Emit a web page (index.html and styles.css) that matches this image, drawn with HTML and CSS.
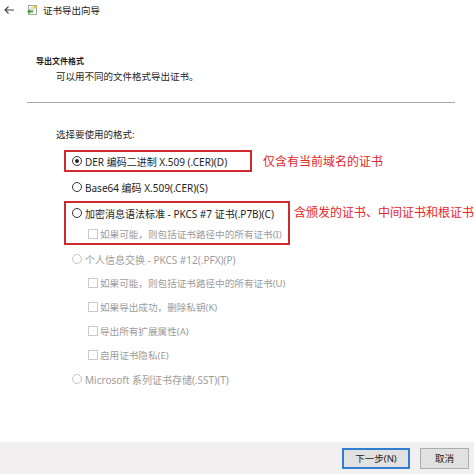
FILE: index.html
```html
<!DOCTYPE html>
<html lang="zh-CN">
  <head>
    <meta charset="UTF-8" />
    <meta name="viewport" content="width=device-width, initial-scale=1.0" />
    <title>证书导出向导</title>
    <link rel="stylesheet" href="styles.css">
  </head>
  <body>
    <div class="dialog">
      <div class="titlebar">
        <svg class="back" width="12" height="10" viewBox="0 0 12 10">
          <path d="M11 5H2M5.5 1.5L2 5l3.5 3.5" fill="none" stroke="#444" stroke-width="1.1" />
        </svg>
        <svg class="wizard-icon" width="12" height="12" viewBox="0 0 12 12">
          <rect x="2.5" y="1.5" width="8" height="9" fill="#fbfbf4" stroke="#8a9a80" stroke-width="0.8" />
          <path d="M4 4h5M4 6h4" stroke="#b0b8b0" stroke-width="0.7" />
          <path d="M1 7.5l3-2.5v1.5h3v2H4v1.5z" fill="#4aa23c" />
          <circle cx="9" cy="3" r="1.6" fill="#f2c62e" />
        </svg>
        <span class="title">证书导出向导</span>
      </div>

      <div class="intro">
        <h2>导出文件格式</h2>
        <p>可以用不同的文件格式导出证书。</p>
      </div>

      <hr class="rule" />

      <div class="main">
        <p class="prompt">选择要使用的格式:</p>

        <div class="opts">
          <div class="line">
            <div class="mark mark-der">
              <div class="opt"><span class="radio on"></span>DER 编码二进制 X.509 (.CER)(D)</div>
            </div>
            <span class="note note-der">仅含有当前域名的证书</span>
          </div>

          <div class="opt free gap-base"><span class="radio"></span>Base64 编码 X.509(.CER)(S)</div>

          <div class="line">
            <div class="mark mark-p7b">
              <div class="opt"><span class="radio"></span>加密消息语法标准 - PKCS #7 证书(.P7B)(C)</div>
              <div class="opt sub off"><span class="check"></span>如果可能，则包括证书路径中的所有证书(I)</div>
            </div>
            <span class="note note-p7b">含颁发的证书、中间证书和根证书</span>
          </div>

          <div class="list">
            <div class="opt free off"><span class="radio"></span>个人信息交换 - PKCS #12(.PFX)(P)</div>
            <div class="opt free sub off"><span class="check"></span>如果可能，则包括证书路径中的所有证书(U)</div>
            <div class="opt free sub off"><span class="check"></span>如果导出成功，删除私钥(K)</div>
            <div class="opt free sub off"><span class="check"></span>导出所有扩展属性(A)</div>
            <div class="opt free sub off"><span class="check"></span>启用证书隐私(E)</div>
            <div class="opt free off"><span class="radio"></span>Microsoft 系列证书存储(.SST)(T)</div>
          </div>
        </div>
      </div>

      <div class="footer">
        <button class="btn primary">下一步(N)</button>
        <button class="btn cancel">取消</button>
      </div>
    </div>
  </body>
</html>
```

FILE: styles.css
```css
body {
  margin: 0;
  padding: 0;
  background: #fff;
  font-family: "Noto Sans", "Noto Sans CJK SC", sans-serif;
  color: #1e1e1e;
}

.dialog {
  width: 474px;
  height: 474px;
  display: flex;
  flex-direction: column;
  background: #fff;
  overflow: hidden;
}

.titlebar {
  height: 20px;
  display: flex;
  align-items: center;
  padding-left: 3px;
}

.back {
  margin-right: 11px;
}

.wizard-icon {
  margin-right: 5px;
}

.title {
  font-size: 9.5px;
  color: #222;
}

.intro {
  margin-top: 35px;
  padding-left: 36px;
}

.intro h2 {
  margin: 0;
  font-size: 8px;
  line-height: 12px;
  font-weight: bold;
}

.intro p {
  margin: 3px 0 0 20px;
  font-size: 9.5px;
  line-height: 14px;
}

.rule {
  margin: 18px 19px 0 27px;
  border: none;
  border-top: 1px solid #a8a8a8;
  height: 0;
}

.main {
  padding-left: 56px;
}

.prompt {
  margin: 25px 0 0 0;
  font-size: 9.5px;
  line-height: 14px;
}

.opts {
  margin-top: 8px;
  margin-left: 8px;
}

.line {
  display: flex;
  align-items: flex-start;
}

.mark {
  border: 2px solid #cf2a30;
  box-sizing: border-box;
  padding-left: 6px;
}

.mark-der {
  width: 188px;
  height: 22px;
  display: flex;
  align-items: center;
}

.mark-p7b {
  width: 226px;
  height: 44px;
  padding-top: 1px;
}

.mark-p7b .opt {
  height: 18px;
}

.mark-p7b .sub {
  margin-top: 3px;
}

.note {
  color: #e5262b;
  font-family: "Noto Sans CJK SC", sans-serif;
  font-size: 12px;
  line-height: 16px;
}

.note-der {
  margin: 3px 0 0 11px;
}

.note-p7b {
  margin: 3px 0 0 4px;
}

.opt {
  display: flex;
  align-items: center;
  font-size: 10px;
  white-space: nowrap;
}

.opt.free {
  padding-left: 8px;
  height: 24px;
}

.gap-base {
  margin: 3px 0 2px 0;
  height: 22px;
}

.opt.sub {
  padding-left: 16px;
  font-size: 9.6px;
}

.opt.free.sub {
  padding-left: 24px;
}

.opt.off {
  color: #9c9c9c;
}

.list {
  margin-top: 2px;
}

.radio {
  width: 10px;
  height: 10px;
  border: 1px solid #333;
  border-radius: 50%;
  box-sizing: border-box;
  margin-right: 3px;
  position: relative;
  flex-shrink: 0;
}

.radio.on::after {
  content: "";
  position: absolute;
  left: 2px;
  top: 2px;
  width: 4px;
  height: 4px;
  border-radius: 50%;
  background: #222;
}

.off .radio {
  border-color: #c4c4c4;
}

.check {
  width: 10px;
  height: 10px;
  border: 1px solid #cacaca;
  box-sizing: border-box;
  margin-right: 2px;
  flex-shrink: 0;
}

.footer {
  margin-top: auto;
  height: 32px;
  background: #f1eff0;
  display: flex;
  justify-content: flex-end;
  align-items: center;
  gap: 10px;
  padding-right: 5px;
}

.btn {
  height: 21px;
  width: 68px;
  padding: 0;
  font-family: "Noto Sans", "Noto Sans CJK SC", sans-serif;
  font-size: 9.5px;
  color: #222;
  background: #e1e1e1;
  border: 1px solid #adadad;
}

.btn.primary {
  border: 2px solid #2f7fd0;
}

.btn.cancel {
  width: 49px;
}
```
